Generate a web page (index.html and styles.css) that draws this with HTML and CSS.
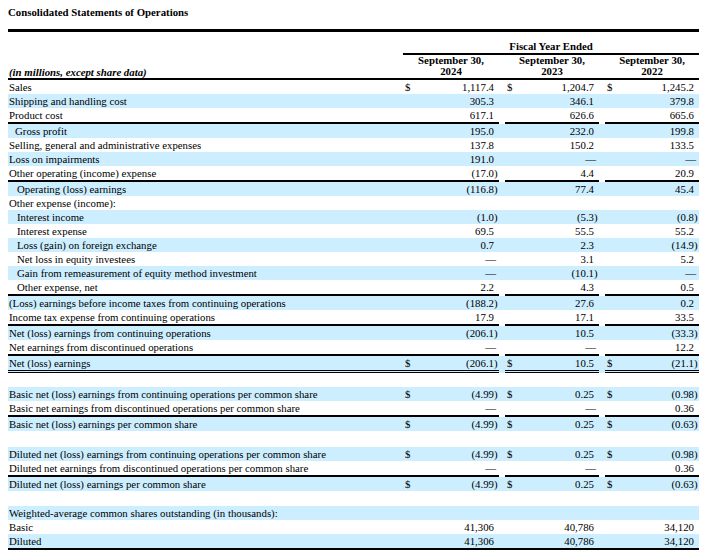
FILE: index.html
```html
<!DOCTYPE html>
<html>
<head>
<meta charset="utf-8">
<title>Consolidated Statements of Operations</title>
<link rel="stylesheet" href="styles.css">
</head>
<body>
<div class="page">
<div class="title">Consolidated Statements of Operations</div>
<table class="fs">
<colgroup>
<col class="c-l"><col class="c-d"><col class="c-n1"><col class="c-p"><col class="c-g">
<col class="c-d"><col class="c-n"><col class="c-p"><col class="c-g">
<col class="c-d"><col class="c-n"><col class="c-p">
</colgroup>
<tr class="h1"><td class="l"></td><td colspan="11" class="fy">Fiscal Year Ended</td></tr>
<tr class="h2"><td class="l unit">(in millions, except share data)</td><td colspan="3" class="sep">September 30,<br>2024</td><td class="g"></td><td colspan="3" class="sep">September 30,<br>2023</td><td class="g"></td><td colspan="3" class="sep">September 30,<br>2022</td></tr>

<tr><td class="l">Sales</td><td class="d">$</td><td class="n">1,117.4</td><td class="p"></td><td class="g"></td><td class="d">$</td><td class="n">1,204.7</td><td class="p"></td><td class="g"></td><td class="d">$</td><td class="n">1,245.2</td><td class="p"></td></tr>
<tr class="b"><td class="l">Shipping and handling cost</td><td class="d"></td><td class="n">305.3</td><td class="p"></td><td class="g"></td><td class="d"></td><td class="n">346.1</td><td class="p"></td><td class="g"></td><td class="d"></td><td class="n">379.8</td><td class="p"></td></tr>
<tr class="bb"><td class="l">Product cost</td><td class="d"></td><td class="n">617.1</td><td class="p"></td><td class="g"></td><td class="d"></td><td class="n">626.6</td><td class="p"></td><td class="g"></td><td class="d"></td><td class="n">665.6</td><td class="p"></td></tr>
<tr class="b"><td class="l i1">Gross profit</td><td class="d"></td><td class="n">195.0</td><td class="p"></td><td class="g"></td><td class="d"></td><td class="n">232.0</td><td class="p"></td><td class="g"></td><td class="d"></td><td class="n">199.8</td><td class="p"></td></tr>
<tr><td class="l">Selling, general and administrative expenses</td><td class="d"></td><td class="n">137.8</td><td class="p"></td><td class="g"></td><td class="d"></td><td class="n">150.2</td><td class="p"></td><td class="g"></td><td class="d"></td><td class="n">133.5</td><td class="p"></td></tr>
<tr class="b"><td class="l">Loss on impairments</td><td class="d"></td><td class="n">191.0</td><td class="p"></td><td class="g"></td><td class="d"></td><td class="n x" colspan="2">—</td><td class="g"></td><td class="d"></td><td class="n x" colspan="2">—</td></tr>
<tr class="bb"><td class="l">Other operating (income) expense</td><td class="d"></td><td class="n">(17.0</td><td class="p">)</td><td class="g"></td><td class="d"></td><td class="n">4.4</td><td class="p"></td><td class="g"></td><td class="d"></td><td class="n">20.9</td><td class="p"></td></tr>
<tr class="b"><td class="l i2">Operating (loss) earnings</td><td class="d"></td><td class="n">(116.8</td><td class="p">)</td><td class="g"></td><td class="d"></td><td class="n">77.4</td><td class="p"></td><td class="g"></td><td class="d"></td><td class="n">45.4</td><td class="p"></td></tr>
<tr><td class="l">Other expense (income):</td><td class="d"></td><td class="n"></td><td class="p"></td><td class="g"></td><td class="d"></td><td class="n"></td><td class="p"></td><td class="g"></td><td class="d"></td><td class="n"></td><td class="p"></td></tr>
<tr class="b"><td class="l i2">Interest income</td><td class="d"></td><td class="n">(1.0</td><td class="p">)</td><td class="g"></td><td class="d"></td><td class="n">(5.3</td><td class="p">)</td><td class="g"></td><td class="d"></td><td class="n">(0.8</td><td class="p">)</td></tr>
<tr><td class="l i2">Interest expense</td><td class="d"></td><td class="n">69.5</td><td class="p"></td><td class="g"></td><td class="d"></td><td class="n">55.5</td><td class="p"></td><td class="g"></td><td class="d"></td><td class="n">55.2</td><td class="p"></td></tr>
<tr class="b"><td class="l i2">Loss (gain) on foreign exchange</td><td class="d"></td><td class="n">0.7</td><td class="p"></td><td class="g"></td><td class="d"></td><td class="n">2.3</td><td class="p"></td><td class="g"></td><td class="d"></td><td class="n">(14.9</td><td class="p">)</td></tr>
<tr><td class="l i2">Net loss in equity investees</td><td class="d"></td><td class="n x" colspan="2">—</td><td class="g"></td><td class="d"></td><td class="n">3.1</td><td class="p"></td><td class="g"></td><td class="d"></td><td class="n">5.2</td><td class="p"></td></tr>
<tr class="b"><td class="l i2">Gain from remeasurement of equity method investment</td><td class="d"></td><td class="n x" colspan="2">—</td><td class="g"></td><td class="d"></td><td class="n">(10.1</td><td class="p">)</td><td class="g"></td><td class="d"></td><td class="n x" colspan="2">—</td></tr>
<tr class="bb"><td class="l i2">Other expense, net</td><td class="d"></td><td class="n">2.2</td><td class="p"></td><td class="g"></td><td class="d"></td><td class="n">4.3</td><td class="p"></td><td class="g"></td><td class="d"></td><td class="n">0.5</td><td class="p"></td></tr>
<tr class="b"><td class="l">(Loss) earnings before income taxes from continuing operations</td><td class="d"></td><td class="n">(188.2</td><td class="p">)</td><td class="g"></td><td class="d"></td><td class="n">27.6</td><td class="p"></td><td class="g"></td><td class="d"></td><td class="n">0.2</td><td class="p"></td></tr>
<tr class="bb"><td class="l">Income tax expense from continuing operations</td><td class="d"></td><td class="n">17.9</td><td class="p"></td><td class="g"></td><td class="d"></td><td class="n">17.1</td><td class="p"></td><td class="g"></td><td class="d"></td><td class="n">33.5</td><td class="p"></td></tr>
<tr class="b"><td class="l">Net (loss) earnings from continuing operations</td><td class="d"></td><td class="n">(206.1</td><td class="p">)</td><td class="g"></td><td class="d"></td><td class="n">10.5</td><td class="p"></td><td class="g"></td><td class="d"></td><td class="n">(33.3</td><td class="p">)</td></tr>
<tr class="bb"><td class="l">Net earnings from discontinued operations</td><td class="d"></td><td class="n x" colspan="2">—</td><td class="g"></td><td class="d"></td><td class="n x" colspan="2">—</td><td class="g"></td><td class="d"></td><td class="n">12.2</td><td class="p"></td></tr>
<tr class="b dbl"><td class="l">Net (loss) earnings</td><td class="d">$</td><td class="n">(206.1</td><td class="p">)</td><td class="g"></td><td class="d">$</td><td class="n">10.5</td><td class="p"></td><td class="g"></td><td class="d">$</td><td class="n">(21.1</td><td class="p">)</td></tr>
<tr class="blank"><td class="l">&nbsp;</td><td colspan="11"></td></tr>
<tr class="b"><td class="l">Basic net (loss) earnings from continuing operations per common share</td><td class="d">$</td><td class="n">(4.99</td><td class="p">)</td><td class="g"></td><td class="d">$</td><td class="n">0.25</td><td class="p"></td><td class="g"></td><td class="d">$</td><td class="n">(0.98</td><td class="p">)</td></tr>
<tr class="bb"><td class="l">Basic net earnings from discontinued operations per common share</td><td class="d"></td><td class="n x" colspan="2">—</td><td class="g"></td><td class="d"></td><td class="n x" colspan="2">—</td><td class="g"></td><td class="d"></td><td class="n">0.36</td><td class="p"></td></tr>
<tr class="b"><td class="l">Basic net (loss) earnings per common share</td><td class="d">$</td><td class="n">(4.99</td><td class="p">)</td><td class="g"></td><td class="d">$</td><td class="n">0.25</td><td class="p"></td><td class="g"></td><td class="d">$</td><td class="n">(0.63</td><td class="p">)</td></tr>
<tr class="blank tall"><td class="l">&nbsp;</td><td colspan="11"></td></tr>
<tr class="b"><td class="l">Diluted net (loss) earnings from continuing operations per common share</td><td class="d">$</td><td class="n">(4.99</td><td class="p">)</td><td class="g"></td><td class="d">$</td><td class="n">0.25</td><td class="p"></td><td class="g"></td><td class="d">$</td><td class="n">(0.98</td><td class="p">)</td></tr>
<tr class="bb"><td class="l">Diluted net earnings from discontinued operations per common share</td><td class="d"></td><td class="n x" colspan="2">—</td><td class="g"></td><td class="d"></td><td class="n x" colspan="2">—</td><td class="g"></td><td class="d"></td><td class="n">0.36</td><td class="p"></td></tr>
<tr class="b"><td class="l">Diluted net (loss) earnings per common share</td><td class="d">$</td><td class="n">(4.99</td><td class="p">)</td><td class="g"></td><td class="d">$</td><td class="n">0.25</td><td class="p"></td><td class="g"></td><td class="d">$</td><td class="n">(0.63</td><td class="p">)</td></tr>
<tr class="blank mid"><td class="l">&nbsp;</td><td colspan="11"></td></tr>
<tr class="b"><td class="l">Weighted-average common shares outstanding (in thousands):</td><td colspan="11"></td></tr>
<tr><td class="l">Basic</td><td class="d"></td><td class="n">41,306</td><td class="p"></td><td class="g"></td><td class="d"></td><td class="n">40,786</td><td class="p"></td><td class="g"></td><td class="d"></td><td class="n">34,120</td><td class="p"></td></tr>
<tr class="b last"><td class="l">Diluted</td><td class="d"></td><td class="n">41,306</td><td class="p"></td><td class="g"></td><td class="d"></td><td class="n">40,786</td><td class="p"></td><td class="g"></td><td class="d"></td><td class="n">34,120</td><td class="p"></td></tr>
</table>
</div>
</body>
</html>
```
FILE: styles.css
```css
body {
  margin: 0;
  background: #ffffff;
  color: #000000;
  font-family: "Liberation Serif", "Times New Roman", serif;
  font-size: 10.8px;
}
.page {
  padding: 6px 8px;
}
.title {
  font-weight: bold;
  line-height: 12px;
  margin: 0 0 11px;
}
.fs {
  width: 691px;
  table-layout: fixed;
  border-collapse: separate;
  border-spacing: 0;
  border-top: 3px solid #000000;
}
.c-l { width: 395px; }
.c-d { width: 12px; }
.c-n1 { width: 79px; }
.c-n { width: 77px; }
.c-p { width: 5px; }
.c-g { width: 6px; }
.fs td {
  padding: 0;
  line-height: 14px;
  white-space: nowrap;
  vertical-align: middle;
  overflow: visible;
}
.fs .l {
  padding-left: 1px;
}
.fs .i1 { padding-left: 7px; }
.fs .i2 { padding-left: 9px; }
.fs .d {
  padding-left: 2px;
  text-align: left;
}
.fs .n {
  text-align: right;
}
.fs .n.x {
  padding-right: 3px;
}
.fs .p {
  text-align: left;
}
.fs .fy {
  text-align: center;
  font-weight: bold;
  line-height: 12px;
  padding: 8px 0 1px;
  vertical-align: bottom;
  border-bottom: 2px solid #000000;
}
.fs .h2 td {
  border-bottom: 2px solid #000000;
  vertical-align: bottom;
}
.fs .sep {
  text-align: center;
  font-weight: bold;
  line-height: 11px;
  padding-bottom: 1px;
}
.fs .unit {
  font-weight: bold;
  font-style: italic;
  line-height: 12px;
}
.fs tr.tall td {
  line-height: 16px;
}
.fs tr.mid td {
  line-height: 15px;
}
.fs tr.b td {
  background: #cceeff;
}
.fs tr.bb td:not(.g) {
  border-bottom: 2px solid #000000;
}
.fs tr.dbl td:not(.g) {
  border-bottom: 3px double #000000;
}
.fs tr.last td {
  border-bottom: 2px solid #000000;
}
```
